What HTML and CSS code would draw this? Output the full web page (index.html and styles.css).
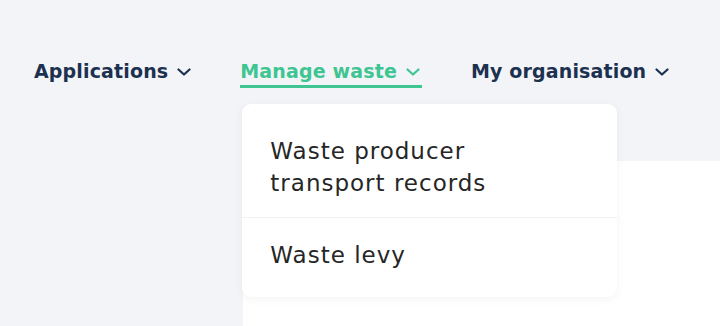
FILE: index.html
```html
<!DOCTYPE html>
<html>
<head>
<meta charset="utf-8">
<link rel="stylesheet" href="styles.css">
</head>
<body>
<header class="header">
  <nav class="nav">
    <div class="nav-item">
      <span class="nav-label">Applications</span>
      <svg class="chev" viewBox="0 0 14 8" width="14" height="8"><path d="M1.5 1.5 L7 6.5 L12.5 1.5" fill="none" stroke="currentColor" stroke-width="2.2" stroke-linecap="round" stroke-linejoin="round"/></svg>
    </div>
    <div class="nav-item active">
      <span class="nav-label">Manage waste</span>
      <svg class="chev" viewBox="0 0 14 8" width="14" height="8"><path d="M1.5 1.5 L7 6.5 L12.5 1.5" fill="none" stroke="currentColor" stroke-width="2.2" stroke-linecap="round" stroke-linejoin="round"/></svg>
      <div class="dropdown">
        <a class="dropdown-item">Waste producer<br>transport records</a>
        <a class="dropdown-item">Waste levy</a>
      </div>
    </div>
    <div class="nav-item">
      <span class="nav-label">My organisation</span>
      <svg class="chev" viewBox="0 0 14 8" width="14" height="8"><path d="M1.5 1.5 L7 6.5 L12.5 1.5" fill="none" stroke="currentColor" stroke-width="2.2" stroke-linecap="round" stroke-linejoin="round"/></svg>
    </div>
  </nav>
</header>
<main class="content"></main>
</body>
</html>
```

FILE: styles.css
```css
html, body {
  margin: 0;
  padding: 0;
  height: 100%;
}
body {
  background: #f3f4f7;
  font-family: "DejaVu Sans", sans-serif;
  overflow: hidden;
}
.header {
  padding: 57px 0 0 34px;
  height: 103px;
  box-sizing: border-box;
}
.nav {
  display: flex;
  gap: 49px;
  align-items: flex-start;
}
.nav-item {
  position: relative;
  display: flex;
  align-items: center;
  gap: 9px;
  color: #1c3150;
  font-weight: bold;
  font-size: 19px;
  line-height: 28px;
  letter-spacing: 0.15px;
}
.nav-item.active {
  color: #3ec592;
  border-bottom: 3px solid #3ec592;
  padding-right: 2px;
}
.chev {
  display: block;
  margin-top: 2px;
}
.dropdown {
  position: absolute;
  top: 47px;
  left: 2px;
  width: 375px;
  background: #fff;
  border-radius: 9px;
  box-shadow: 0 2px 10px rgba(30, 40, 60, 0.05);
  display: flex;
  flex-direction: column;
  z-index: 2;
}
.dropdown-item {
  display: block;
  padding: 31px 28px 18px 28px;
  font-family: "DejaVu Sans", sans-serif;
  font-weight: normal;
  font-size: 23px;
  line-height: 32px;
  color: #262626;
  letter-spacing: 1px;
}
.dropdown-item + .dropdown-item {
  border-top: 1px solid #f1f2f4;
  padding-top: 21px;
  padding-bottom: 26px;
}
.content {
  margin-left: 243px;
  margin-top: 58px;
  background: #fff;
  height: 165px;
}
```
